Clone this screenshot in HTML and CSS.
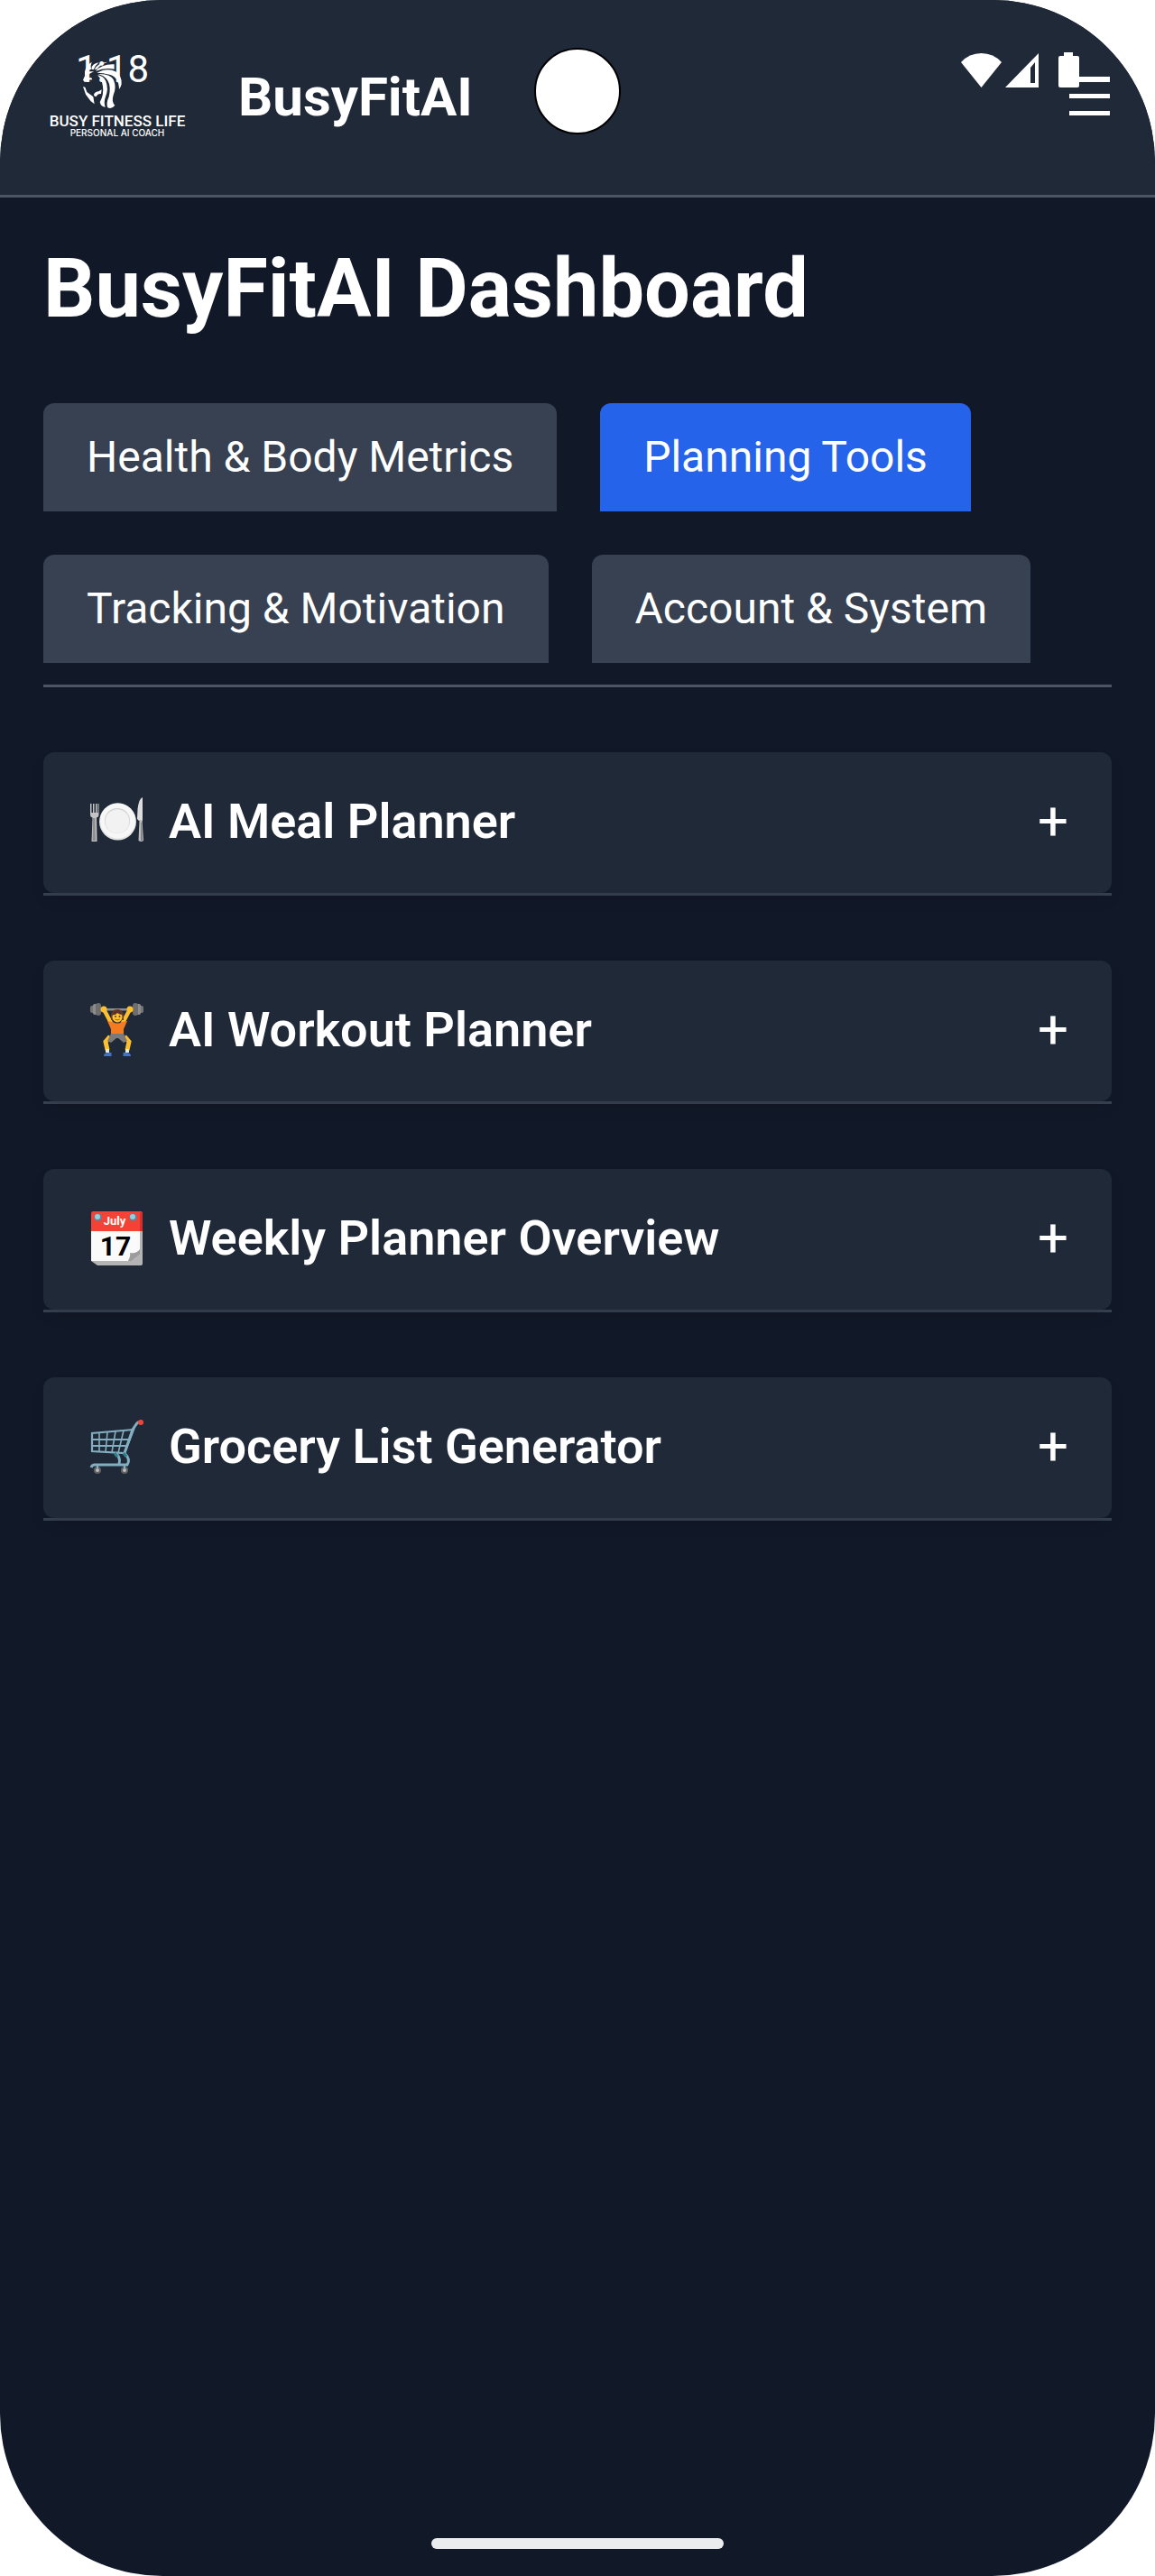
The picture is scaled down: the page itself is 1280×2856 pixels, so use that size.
FILE: index.html
```html
<!DOCTYPE html>
<html lang="en">
<head>
  <meta charset="UTF-8" />
  <meta name="viewport" content="width=device-width, initial-scale=1.0"/>
  <title>BusyFitAI</title>
  <link rel="stylesheet" href="styles.css">
</head>
<body>
  <div class="phone">
    <header class="topbar">
      <svg class="logo" viewBox="0 0 168 96" role="img" aria-label="Busy Fitness Life">
        <!-- lion head -->
        <g transform="translate(34 -4) scale(0.3333)" fill="#fff">
          <path d="M36 72 Q38 52 59 38 Q54 50 57 62 Q46 66 49 72 Z"/>
          <path d="M58 62 Q58 44 83 40 Q70 50 65 64 Z"/>
          <path d="M68 64 Q78 40 112 38 Q88 46 76 62 Z"/>
          <path d="M72 69 Q92 44 134 46 L134 62 Q100 56 72 69 Z"/>
          <path d="M76 74 Q112 56 138 70 Q160 84 158 112 Q156 122 150 129 Q149 88 118 80 Q96 74 76 74 Z"/>
          <path d="M80 78 Q120 76 132 98 Q142 122 131 148 Q124 172 136 182 Q126 196 112 190 Q106 176 116 154 Q124 120 112 100 Q102 84 80 78 Z"/>
          <path d="M78 82 Q98 84 106 102 Q116 128 105 154 Q98 172 104 188 Q90 188 86 172 Q100 146 96 120 Q94 98 78 82 Z"/>
          <path d="M36 70 L66 70 L52 77 L40 82 L42 90 L58 91 L61 97 L46 98 L36 106 L30 98 L36 84 Z"/>
          <path d="M30 120 L37 122 L43 138 L56 148 L64 154 L68 178 L56 169 L39 146 Z"/>
          <path d="M66 150 Q66 138 82 136 L92 130 L90 144 Q80 142 73 154 Z"/>
        </g>
        <text class="logo-name" x="82" y="80">BUSY FITNESS LIFE</text>
        <text class="logo-sub" x="82" y="91">PERSONAL AI COACH</text>
      </svg>
      <span class="brand">BusyFitAI</span>
      <button class="menu-btn" aria-label="Menu">
        <svg viewBox="0 0 48 48" width="48" height="48" fill="#fff">
          <path d="M1 1h45v6H1zM1 20h45v5H1zM1 39h45v5H1z"/>
        </svg>
      </button>
    </header>

    <main>
      <h1>BusyFitAI Dashboard</h1>

      <div class="tabs">
        <button class="tab">Health &amp; Body Metrics</button>
        <button class="tab active">Planning Tools</button>
        <button class="tab">Tracking &amp; Motivation</button>
        <button class="tab">Account &amp; System</button>
      </div>

      <div class="cards">
        <section class="card">
          <button class="card-header">
            <svg class="card-icon" viewBox="0 0 67 60">
              <g transform="translate(0 3)">
                <!-- fork -->
                <path d="M4 7h1.500v10h1.500V7h1.500v10h1.500V7h1.500v10h1V7h1v12q0 3-2.500 3.500L11.500 49h-6L6.500 22.500Q4 22 4 19z" fill="#c4c4c4"/>
                <path d="M7 23h2.500l.5 25H6.500z" fill="#8f8f8f"/>
                <!-- plate -->
                <circle cx="34.500" cy="27" r="20.500" fill="#e4e4e4"/>
                <circle cx="34.500" cy="26" r="19.500" fill="#f7f7f7"/>
                <circle cx="34" cy="26" r="14" fill="#d0d0d0"/>
                <circle cx="34" cy="26.500" r="13.300" fill="#f2f2f2"/>
                <!-- knife -->
                <path d="M62 0q-4 1-5.500 13l-.5 11q2 3 6 2z" fill="#dcdcdc"/>
                <path d="M58.500 25h3L63 48q-2.500 2-5.500 0z" fill="#bdbdbd"/>
                <path d="M60 28h1l1 20h-2z" fill="#808080"/>
              </g>
            </svg>
            <span class="card-title">AI Meal Planner</span>
            <span class="plus">+</span>
          </button>
        </section>

        <section class="card">
          <button class="card-header">
            <svg class="card-icon" viewBox="0 0 67 60">
              <!-- barbell -->
              <path d="M4 6h59v2.500H4z" fill="#8a8f92"/>
              <rect x="4" y="3" width="5" height="8" rx="2" fill="#757575"/>
              <rect x="7" y="1" width="5" height="12" rx="2" fill="#8c8c8c"/>
              <rect x="10" y="0" width="6" height="14" rx="3" fill="#6e6e6e"/>
              <rect x="58" y="3" width="5" height="8" rx="2" fill="#757575"/>
              <rect x="55" y="1" width="5" height="12" rx="2" fill="#8c8c8c"/>
              <rect x="51" y="0" width="6" height="14" rx="3" fill="#6e6e6e"/>
              <!-- lifter -->
              <path d="M19 7l8 15M48 7l-8 15" stroke="#fdbf2d" stroke-width="4.500" stroke-linecap="round"/>
              <circle cx="19" cy="7" r="3.500" fill="#fbc02d"/>
              <circle cx="48" cy="7" r="3.500" fill="#fbc02d"/>
              <path d="M27 15q0-8 7-8t7 8v4H27z" fill="#6d3b2e"/>
              <ellipse cx="34" cy="15.500" rx="5.500" ry="6" fill="#fcc32f"/>
              <path d="M28 13q2-5 6-5t6 5q-4 0-6-2-2 3-6 2z" fill="#5d3226"/>
              <circle cx="32" cy="15" r="1" fill="#5d4037"/>
              <circle cx="36.500" cy="15" r="1" fill="#5d4037"/>
              <path d="M31.500 18q2.500 2 5 0" stroke="#a15a1c" fill="none"/>
              <path d="M23 20l6 1q5 3 10 0l6-1-4 9v6H27v-6z" fill="#f47b20"/>
              <path d="M26 37l-5 6 2 9M42 37l5 6-2 9" stroke="#fdbf2d" stroke-width="5" fill="none"/>
              <path d="M27 34h14l4 8-4 2-6-5h-2l-6 5-4-2z" fill="#7a7a7a"/>
              <path d="M21 51h4v4h-4zM43 51h4v4h-4z" fill="#e8e8e8"/>
              <path d="M19 59q0-4 5-4h3.500v4zM49 59q0-4-5-4h-3.500v4z" fill="#4472c4"/>
            </svg>
            <span class="card-title">AI Workout Planner</span>
            <span class="plus">+</span>
          </button>
        </section>

        <section class="card">
          <button class="card-header">
            <svg class="card-icon" viewBox="0 0 67 60">
              <!-- tear-off calendar -->
              <path d="M5 3h56q1 0 1 2v53q0 2-2 2H12l-7-5z" fill="#b4b4b4"/>
              <path d="M5 22h54v26l-9 7H5z" fill="#fafafa"/>
              <path d="M46 55q3-6 2-9 8 1 11-4v6l-9 7z" fill="#9c9c9c"/>
              <path d="M7 0h53q2 0 2 3v19H5V3q0-3 2-3z" fill="#f44336"/>
              <path d="M59 1q3 0 3 3v18h-3z" fill="#d32f2f"/>
              <circle cx="12.500" cy="6.500" r="4" fill="#4d8ea3"/>
              <circle cx="12" cy="6" r="3" fill="#94cfe0"/>
              <circle cx="51.500" cy="6.500" r="4" fill="#4d8ea3"/>
              <circle cx="51" cy="6" r="3" fill="#94cfe0"/>
              <text class="cal-month" x="31" y="15">July</text>
              <text class="cal-day" x="32" y="49">17</text>
            </svg>
            <span class="card-title">Weekly Planner Overview</span>
            <span class="plus">+</span>
          </button>
        </section>

        <section class="card">
          <button class="card-header">
            <svg class="card-icon" viewBox="0 0 67 60" fill="none" stroke="#82aec0" stroke-width="2">
              <!-- basket -->
              <path d="M52 11L6 15v20l36 2zM6 22h43M6 29h39" stroke-width="2.200"/>
              <path d="M14 14v21M23 14l-2 22M32 13l-4 23M41 12l-6 25" stroke-width="1.600"/>
              <!-- frame and handle -->
              <path d="M42 37l9-26 4-6q2-3 6-3" stroke-width="3"/>
              <path d="M32 37q6 5 4 12M42 37q7 7 3 13H9q-3 0-4 3" stroke-width="3"/>
              <path d="M31 37l3 4M41 37l3 4" stroke="#2f7f8c" stroke-width="3"/>
              <circle cx="60" cy="3" r="3" fill="#f44336" stroke="none"/>
              <circle cx="12" cy="56" r="3" fill="#bdbdbd" stroke="#616161"/>
              <circle cx="42" cy="56" r="3" fill="#bdbdbd" stroke="#616161"/>
              <path d="M12 50v5M42 50v5"/>
            </svg>
            <span class="card-title">Grocery List Generator</span>
            <span class="plus">+</span>
          </button>
        </section>
      </div>
    </main>

    <!-- system overlay: clock, camera, status icons, gesture bar -->
    <span class="clock">1:18</span>
    <div class="camera"></div>
    <svg class="status-icons" viewBox="0 0 132 40" fill="#fff">
      <path d="M0 11Q9 1 22.500 1T45 11L22.500 39z"/>
      <path fill-rule="evenodd" d="M86 1v38H49zM82 11l-5 6v17h5z"/>
      <path fill-rule="evenodd" d="M114 0h10v4h5q2 0 2 2v31q0 2-2 2h-19q-2 0-2-2V6q0-2 2-2h4z"/>
    </svg>
    <div class="home-bar"></div>
  </div>
</body>
</html>
```
FILE: styles.css
```css
* {
  box-sizing: border-box;
}
body {
  margin: 0;
  background: #fff;
  font-family: Roboto, sans-serif;
  color: #fff;
}
button {
  border: none;
  margin: 0;
  font-family: inherit;
  color: inherit;
  cursor: pointer;
}
.phone {
  position: relative;
  min-height: 100vh;
  background: #111827;
  border-radius: 180px;
  overflow: hidden;
}

/* header */
.topbar {
  display: flex;
  align-items: center;
  gap: 48px;
  height: 219px;
  padding: 0 48px;
  background: #1f2937;
  border-bottom: 3px solid #4b5563;
}
.logo {
  width: 168px;
  height: 96px;
  overflow: visible;
}
.logo-name {
  font-size: 17px;
  font-weight: 500;
  fill: #fff;
  text-anchor: middle;
}
.logo-sub {
  font-family: Inter, sans-serif;
  font-size: 10px;
  font-weight: 500;
  fill: #fff;
  text-anchor: middle;
}
.brand {
  font-size: 60px;
  font-weight: 700;
  line-height: 84px;
}
.menu-btn {
  display: flex;
  margin-left: auto;
  padding: 0;
  background: none;
}

/* content */
main {
  padding: 48px;
}
h1 {
  margin: 0 0 72px;
  font-size: 90px;
  font-weight: 700;
  line-height: 108px;
}
.tabs {
  display: flex;
  flex-wrap: wrap;
  gap: 48px;
  padding-bottom: 24px;
  margin-bottom: 72px;
  border-bottom: 3px solid #4b5563;
}
.tab {
  padding: 24px 48px;
  font-size: 48px;
  line-height: 72px;
  background: #374151;
  border-radius: 12px 12px 0 0;
}
.tab.active {
  background: #2563eb;
}
.cards {
  display: flex;
  flex-direction: column;
  gap: 72px;
}
.card {
  border-bottom: 3px solid #374151;
}
.card-header {
  display: flex;
  align-items: center;
  gap: 24px;
  width: 100%;
  padding: 35px 48px 37px;
  text-align: left;
  background: #1f2937;
  border-radius: 12px;
  box-shadow: 0 9px 18px -3px rgba(0,0,0,0.1);
}
.card-icon {
  width: 67px;
  height: 60px;
}
.card-title {
  flex: 1;
  font-size: 54px;
  font-weight: 600;
  line-height: 84px;
}
.plus {
  font-size: 60px;
  line-height: 84px;
}
.cal-month {
  font-size: 13px;
  font-weight: 700;
  fill: #fff;
  text-anchor: middle;
}
.cal-day {
  font-size: 30px;
  font-weight: 700;
  fill: #000;
  text-anchor: middle;
}

/* system overlay */
.clock {
  position: absolute;
  top: 52px;
  left: 84px;
  font-size: 42px;
  line-height: 50px;
}
.camera {
  position: absolute;
  top: 53px;
  left: 50%;
  width: 96px;
  height: 96px;
  margin-left: -48px;
  background: #fff;
  border: 2px solid #000;
  border-radius: 50%;
}
.status-icons {
  position: absolute;
  top: 58px;
  right: 83px;
  width: 132px;
  height: 40px;
}
.home-bar {
  position: absolute;
  bottom: 30px;
  left: 50%;
  width: 324px;
  height: 12px;
  margin-left: -162px;
  background: #ebecee;
  border-radius: 6px;
}
```
